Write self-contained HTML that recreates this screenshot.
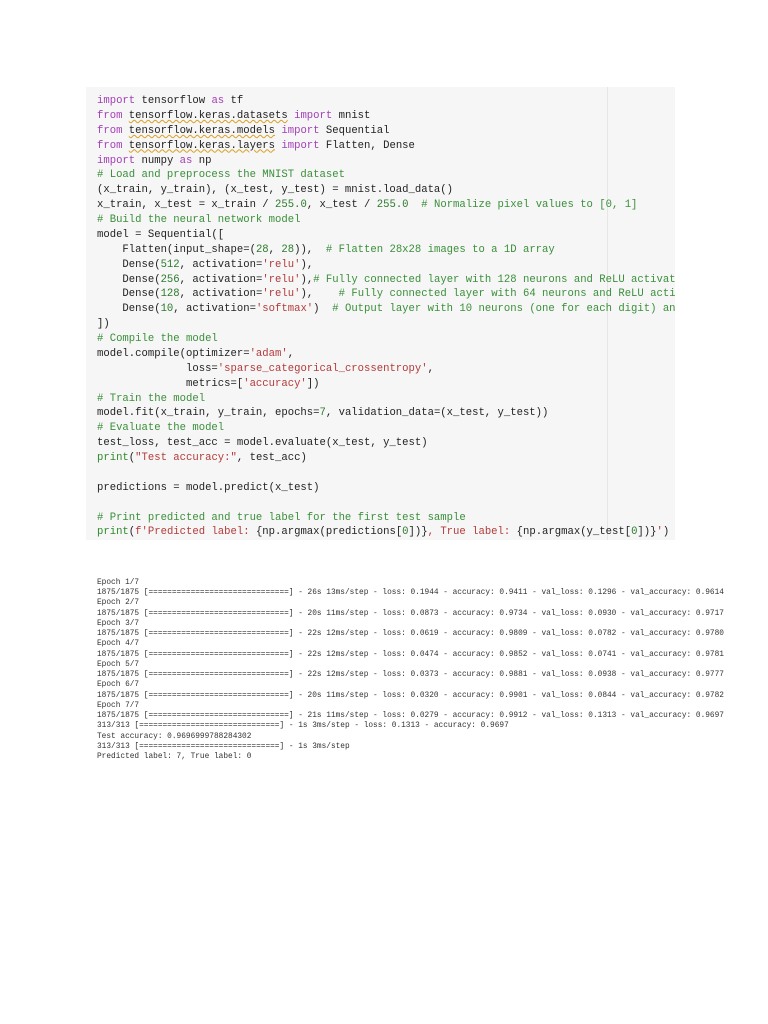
<!DOCTYPE html>
<html><head><style>
html,body{margin:0;padding:0;background:#fff;width:768px;height:1024px;overflow:hidden}
.box{position:absolute;left:86px;top:87px;width:589px;height:453px;background:#f6f6f6;overflow:hidden}
.vl{position:absolute;left:521px;top:0;width:1px;height:453px;background:#e6e6e6}
pre{margin:0;font-family:"Liberation Mono",monospace;white-space:pre}
.code{position:absolute;left:11px;top:7px;font-size:10.6px;line-height:14.87px;color:#222}
.k{color:#a23fb5}.c{color:#3a8f3a}.s{color:#b33a3a}.n{color:#2a7a2a}.b{color:#2d8a2d}
.u{text-decoration:underline wavy #d9a020;text-decoration-thickness:1px}
.out{position:absolute;left:97px;top:578px;font-size:7.8px;line-height:10.24px;color:#333}
</style></head><body>
<div class="box"><div class="vl"></div>
<pre class="code"><span class="k">import</span> tensorflow <span class="k">as</span> tf
<span class="k">from</span> <span class="u">tensorflow.keras.datasets</span> <span class="k">import</span> mnist
<span class="k">from</span> <span class="u">tensorflow.keras.models</span> <span class="k">import</span> Sequential
<span class="k">from</span> <span class="u">tensorflow.keras.layers</span> <span class="k">import</span> Flatten, Dense
<span class="k">import</span> numpy <span class="k">as</span> np
<span class="c"># Load and preprocess the MNIST dataset</span>
(x_train, y_train), (x_test, y_test) = mnist.load_data()
x_train, x_test = x_train / <span class="n">255.0</span>, x_test / <span class="n">255.0</span>  <span class="c"># Normalize pixel values to [0, 1]</span>
<span class="c"># Build the neural network model</span>
model = Sequential([
    Flatten(input_shape=(<span class="n">28</span>, <span class="n">28</span>)),  <span class="c"># Flatten 28x28 images to a 1D array</span>
    Dense(<span class="n">512</span>, activation=<span class="s">'relu'</span>),
    Dense(<span class="n">256</span>, activation=<span class="s">'relu'</span>),<span class="c"># Fully connected layer with 128 neurons and ReLU activation</span>
    Dense(<span class="n">128</span>, activation=<span class="s">'relu'</span>),    <span class="c"># Fully connected layer with 64 neurons and ReLU activation</span>
    Dense(<span class="n">10</span>, activation=<span class="s">'softmax'</span>)  <span class="c"># Output layer with 10 neurons (one for each digit) and</span>
])
<span class="c"># Compile the model</span>
model.compile(optimizer=<span class="s">'adam'</span>,
              loss=<span class="s">'sparse_categorical_crossentropy'</span>,
              metrics=[<span class="s">'accuracy'</span>])
<span class="c"># Train the model</span>
model.fit(x_train, y_train, epochs=<span class="n">7</span>, validation_data=(x_test, y_test))
<span class="c"># Evaluate the model</span>
test_loss, test_acc = model.evaluate(x_test, y_test)
<span class="b">print</span>(<span class="s">"Test accuracy:"</span>, test_acc)

predictions = model.predict(x_test)

<span class="c"># Print predicted and true label for the first test sample</span>
<span class="b">print</span>(<span class="s">f'Predicted label: </span>{np.argmax(predictions[<span class="n">0</span>])}<span class="s">, True label: </span>{np.argmax(y_test[<span class="n">0</span>])}<span class="s">'</span>)</pre>
</div>
<pre class="out">Epoch 1/7
1875/1875 [==============================] - 26s 13ms/step - loss: 0.1944 - accuracy: 0.9411 - val_loss: 0.1296 - val_accuracy: 0.9614
Epoch 2/7
1875/1875 [==============================] - 20s 11ms/step - loss: 0.0873 - accuracy: 0.9734 - val_loss: 0.0930 - val_accuracy: 0.9717
Epoch 3/7
1875/1875 [==============================] - 22s 12ms/step - loss: 0.0619 - accuracy: 0.9809 - val_loss: 0.0782 - val_accuracy: 0.9780
Epoch 4/7
1875/1875 [==============================] - 22s 12ms/step - loss: 0.0474 - accuracy: 0.9852 - val_loss: 0.0741 - val_accuracy: 0.9781
Epoch 5/7
1875/1875 [==============================] - 22s 12ms/step - loss: 0.0373 - accuracy: 0.9881 - val_loss: 0.0938 - val_accuracy: 0.9777
Epoch 6/7
1875/1875 [==============================] - 20s 11ms/step - loss: 0.0320 - accuracy: 0.9901 - val_loss: 0.0844 - val_accuracy: 0.9782
Epoch 7/7
1875/1875 [==============================] - 21s 11ms/step - loss: 0.0279 - accuracy: 0.9912 - val_loss: 0.1313 - val_accuracy: 0.9697
313/313 [==============================] - 1s 3ms/step - loss: 0.1313 - accuracy: 0.9697
Test accuracy: 0.9696999788284302
313/313 [==============================] - 1s 3ms/step
Predicted label: 7, True label: 0</pre>
</body></html>
